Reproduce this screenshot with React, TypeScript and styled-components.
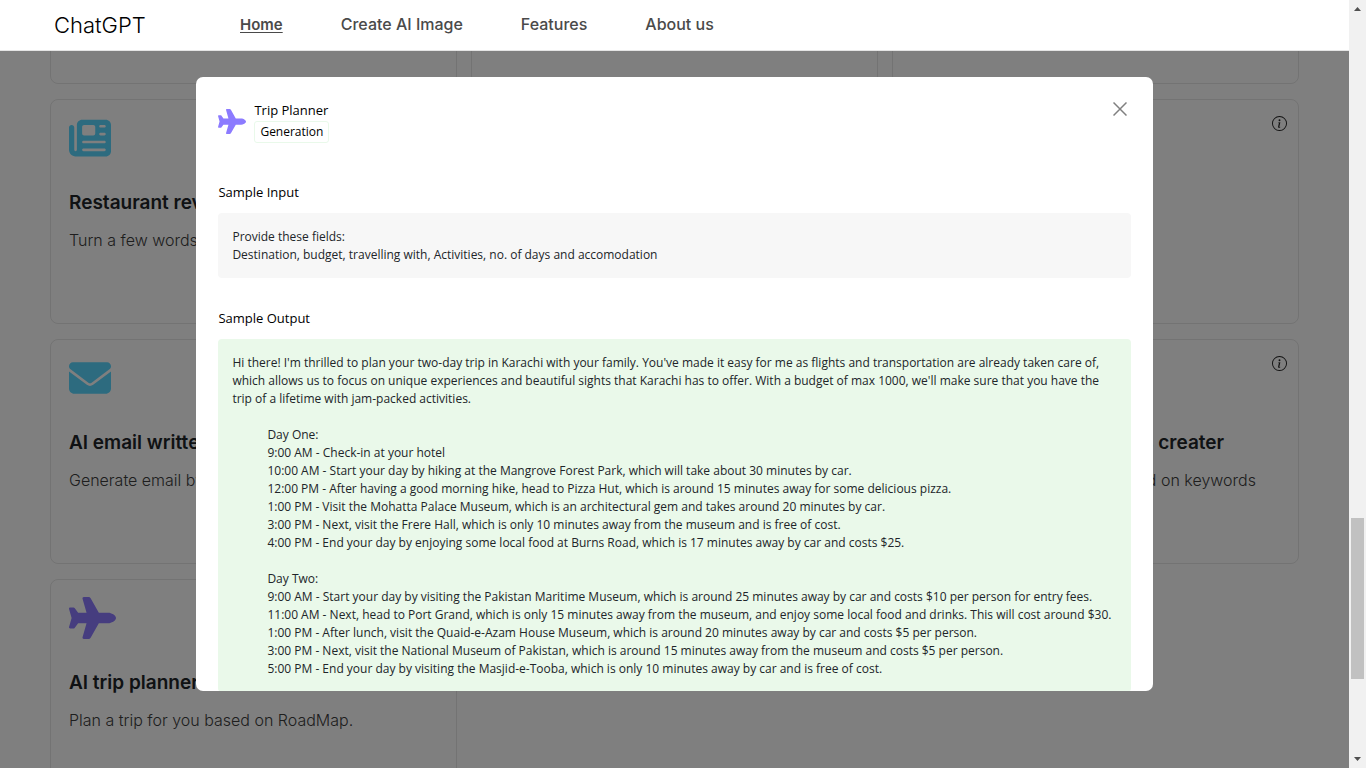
import React from "react";
import styled, { createGlobalStyle } from "styled-components";
import { FaPlane, FaNewspaper, FaEnvelope } from "react-icons/fa6";
import { BsInfoCircle } from "react-icons/bs";

const GlobalStyle = createGlobalStyle`
  *, *::before, *::after { box-sizing: border-box; }
  body { margin: 0; background: #fff; overflow: hidden; }
  h1, h2, h3, p { margin: 0; font-weight: inherit; }
  button { border: 0; padding: 0; background: none; cursor: pointer; color: inherit; font: inherit; }
`;

const brandFont = `Inter, "Liberation Sans", sans-serif`;
const dialogFont = `"Open Sans", "Noto Sans", sans-serif`;

const Shell = styled.div`
  display: grid;
  grid-template-columns: minmax(0, 1fr) 17px;
  height: 100vh;
`;

const Page = styled.div`
  position: relative;
  display: flex;
  flex-direction: column;
  min-height: 0;
  overflow: hidden;
`;

const Header = styled.header`
  position: relative;
  z-index: 2;
  flex: none;
  display: flex;
  align-items: center;
  height: 51px;
  padding: 0 54px 2px;
  border-bottom: 1px solid #e4e4e4;
  background: #fff;
`;

const Brand = styled.a`
  width: 186px;
  padding-top: 2px;
  color: #000;
  font: 300 22px/30px ${brandFont};
  text-decoration: none;
`;

const Nav = styled.nav`
  display: flex;
  align-items: baseline;
  gap: 58px;
`;

const NavLink = styled.a<{ $active?: boolean }>`
  color: #4a4a4a;
  font: ${(p) => (p.$active ? 600 : 500)} ${(p) => (p.$active ? 15 : 16)}px/24px ${brandFont};
  text-decoration: ${(p) => (p.$active ? "underline" : "none")};
  text-underline-offset: 2px;
`;

const Main = styled.main`
  flex: 1;
  min-height: 0;
  display: flex;
  flex-direction: column;
  gap: 15px;
  padding: 0 50px;
  overflow: hidden;
`;

const CardRow = styled.div<{ $height: number }>`
  flex: none;
  display: grid;
  grid-template-columns: repeat(3, minmax(0, 1fr));
  grid-template-rows: 100%;
  gap: 14px;
  align-items: end;
  height: ${(p) => p.$height}px;
  overflow: hidden;
`;

const CardBox = styled.article`
  display: grid;
  grid-template-columns: 1fr auto;
  grid-template-rows: 75px 37px auto;
  height: 225px;
  padding: 16px 11px 0 18px;
  border: 1px solid #e6e6e6;
  border-radius: 8px;
`;

const CardIcon = styled.div<{ $color: string; $wide?: boolean }>`
  padding-top: 1px;
  color: ${(p) => p.$color};
  svg {
    display: block;
    width: ${(p) => (p.$wide ? 47 : 42)}px;
    height: 42px;
  }
`;

const InfoButton = styled.button`
  align-self: start;
  height: 15px;
  color: #222;
  svg { display: block; width: 15px; height: 15px; }
`;

const CardTitle = styled.h2`
  grid-column: 1 / -1;
  color: #212529;
  font: 600 19px/24px ${brandFont};
  white-space: nowrap;
`;

const CardText = styled.p`
  grid-column: 1 / -1;
  color: #3c3c3c;
  font: 300 16px/24px ${brandFont};
  white-space: nowrap;
`;

const Overlay = styled.div`
  position: absolute;
  inset: 0;
  z-index: 1;
  display: flex;
  align-items: center;
  justify-content: center;
  background: rgba(0, 0, 0, 0.5);
`;

const Dialog = styled.section`
  width: 70vw;
  height: 80vh;
  padding: 22px 22px 0;
  border-radius: 7px;
  background: #fff;
  color: #000;
  font-family: ${dialogFont};
  overflow: hidden;
`;

const DialogHeader = styled.header`
  display: flex;
  align-items: flex-start;
  gap: 8px;
  margin-bottom: 38px;
`;

const DialogIcon = styled.div`
  padding-top: 10px;
  color: #8c7bff;
  svg { display: block; width: 28px; height: 25px; }
`;

const DialogName = styled.div`
  flex: 1;
`;

const DialogTitle = styled.h1`
  font-size: 13px;
  line-height: 22px;
`;

const Tag = styled.div`
  width: fit-content;
  padding: 0 5px;
  border: 1px solid #e9f9ea;
  border-radius: 3px;
  font-size: 12px;
  line-height: 20px;
`;

const CloseButton = styled.button`
  padding: 3px 4px;
  color: #808080;
  svg { display: block; width: 14px; height: 14px; }
`;

const SampleTitle = styled.h2`
  margin-bottom: 10px;
  font-size: 13px;
  line-height: 22px;
`;

const Sample = styled.div<{ $tone: "grey" | "green" }>`
  margin-bottom: 29px;
  padding: 15px 14px 14px;
  border-radius: 4px;
  background: ${(p) => (p.$tone === "grey" ? "#f7f7f7" : "#eaf9ea")};
  color: #212529;
  font-size: 12px;
  line-height: 18px;
`;

const Day = styled.div`
  margin-top: 18px;
  padding-left: 35px;
  white-space: nowrap;
`;

const Scrollbar = styled.div`
  display: flex;
  flex-direction: column;
  align-items: center;
  justify-content: space-between;
  background: #f1f1f1;
`;

const Arrow = styled.svg`
  display: block;
  width: 17px;
  height: 17px;
  fill: #505050;
`;

const Track = styled.div`
  flex: 1;
  display: grid;
  grid-template-rows: 501fr 161fr 72fr;
  width: 13px;
`;

const Thumb = styled.div`
  grid-row: 2;
  background: #c1c1c1;
`;

const blue = "#5ad6ff";
const purple = "#8c7bff";

type CardProps = {
  title?: string;
  text?: string;
  icon?: React.ReactNode;
  color?: string;
  wide?: boolean;
};

function Card({ title, text, icon, color = blue, wide }: CardProps) {
  return (
    <CardBox>
      <CardIcon $color={color} $wide={wide}>{icon}</CardIcon>
      <InfoButton type="button" aria-label="Show sample"><BsInfoCircle /></InfoButton>
      {title && <CardTitle>{title}</CardTitle>}
      {text && <CardText>{text}</CardText>}
    </CardBox>
  );
}

const plane = <FaPlane preserveAspectRatio="none" />;

const days = [
  {
    name: "Day One:",
    items: [
      "9:00 AM - Check-in at your hotel",
      "10:00 AM - Start your day by hiking at the Mangrove Forest Park, which will take about 30 minutes by car.",
      "12:00 PM - After having a good morning hike, head to Pizza Hut, which is around 15 minutes away for some delicious pizza.",
      "1:00 PM - Visit the Mohatta Palace Museum, which is an architectural gem and takes around 20 minutes by car.",
      "3:00 PM - Next, visit the Frere Hall, which is only 10 minutes away from the museum and is free of cost.",
      "4:00 PM - End your day by enjoying some local food at Burns Road, which is 17 minutes away by car and costs $25.",
    ],
  },
  {
    name: "Day Two:",
    items: [
      "9:00 AM - Start your day by visiting the Pakistan Maritime Museum, which is around 25 minutes away by car and costs $10 per person for entry fees.",
      "11:00 AM - Next, head to Port Grand, which is only 15 minutes away from the museum, and enjoy some local food and drinks. This will cost around $30.",
      "1:00 PM - After lunch, visit the Quaid-e-Azam House Museum, which is around 20 minutes away by car and costs $5 per person.",
      "3:00 PM - Next, visit the National Museum of Pakistan, which is around 15 minutes away from the museum and costs $5 per person.",
      "5:00 PM - End your day by visiting the Masjid-e-Tooba, which is only 10 minutes away by car and is free of cost.",
    ],
  },
];

export default function App() {
  return (
    <>
      <GlobalStyle />
      <Shell>
        <Page>
          <Header>
            <Brand href="#">ChatGPT</Brand>
            <Nav>
              <NavLink href="#" $active>Home</NavLink>
              <NavLink href="#image">Create AI Image</NavLink>
              <NavLink href="#features">Features</NavLink>
              <NavLink href="#about">About us</NavLink>
            </Nav>
          </Header>
          <Main>
            <CardRow $height={33}>
              <Card />
              <Card />
              <Card />
            </CardRow>
            <CardRow $height={225}>
              <Card icon={<FaNewspaper />} title="Restaurant review" text="Turn a few words into a review" />
              <Card />
              <Card />
            </CardRow>
            <CardRow $height={225}>
              <Card icon={<FaEnvelope />} title="AI email writter" text="Generate email by keywords" />
              <Card />
              <Card title="AI social network captions creater" text="Generate custom captions based on keywords" />
            </CardRow>
            <CardRow $height={225}>
              <Card icon={plane} color={purple} wide title="AI trip planner" text="Plan a trip for you based on RoadMap." />
            </CardRow>
          </Main>
          <Overlay>
            <Dialog role="dialog" aria-modal="true" aria-labelledby="dialog-title">
              <DialogHeader>
                <DialogIcon>{plane}</DialogIcon>
                <DialogName>
                  <DialogTitle id="dialog-title">Trip Planner</DialogTitle>
                  <Tag>Generation</Tag>
                </DialogName>
                <CloseButton type="button" aria-label="Close">
                  <svg viewBox="0 0 14 14" fill="none" stroke="currentColor" strokeWidth="1.5">
                    <path d="M0.5 0.5L13.5 13.5M13.5 0.5L0.5 13.5" />
                  </svg>
                </CloseButton>
              </DialogHeader>
              <SampleTitle>Sample Input</SampleTitle>
              <Sample $tone="grey">
                <p>Provide these fields:</p>
                <p>Destination, budget, travelling with, Activities, no. of days and accomodation</p>
              </Sample>
              <SampleTitle>Sample Output</SampleTitle>
              <Sample $tone="green">
                <p>
                  Hi there! I'm thrilled to plan your two-day trip in Karachi with your family. You've made it easy for me
                  as flights and transportation are already taken care of,<br />
                  which allows us to focus on unique experiences and beautiful sights that Karachi has to offer. With a
                  budget of max 1000, we'll make sure that you have the<br />
                  trip of a lifetime with jam-packed activities.
                </p>
                {days.map((day) => (
                  <Day key={day.name}>
                    <p>{day.name}</p>
                    {day.items.map((item) => (
                      <p key={item}>{item}</p>
                    ))}
                  </Day>
                ))}
              </Sample>
            </Dialog>
          </Overlay>
        </Page>
        <Scrollbar aria-hidden="true">
          <Arrow viewBox="0 0 17 17"><path d="M5 11L8.500 7L12 11Z" /></Arrow>
          <Track><Thumb /></Track>
          <Arrow viewBox="0 0 17 17"><path d="M5 6L8.500 10L12 6Z" /></Arrow>
        </Scrollbar>
      </Shell>
    </>
  );
}
